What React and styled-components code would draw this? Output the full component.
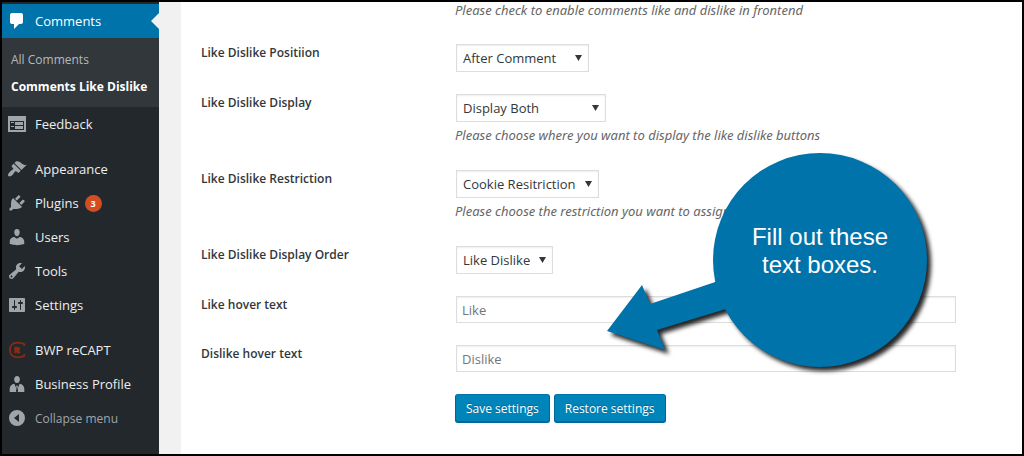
import React from 'react';
import styled, { createGlobalStyle } from 'styled-components';

const GlobalStyle = createGlobalStyle`
    * {
        box-sizing: border-box;
    }

    body {
        margin: 0;
        background: #fff;
        color: #444;
        font-family: 'Open Sans', 'Noto Sans', sans-serif;
        font-size: 13px;
    }
`;

const Frame = styled.div`
    position: relative;
    display: flex;
    min-height: 100vh;
    border: 2px solid #000;
    background: #f1f1f1;
    overflow: hidden;
`;

const Sidebar = styled.nav`
    flex: 0 0 157px;
    padding-top: 2px;
    background: #23282d;
`;

const MenuGroup = styled.ul`
    list-style: none;
    margin: 0 0 11px;
    padding: 0;
`;

const MenuLink = styled.a`
    position: relative;
    display: flex;
    align-items: center;
    gap: 8px;
    height: 34px;
    padding-left: 5px;
    color: ${props => props.$current ? '#fff' : '#eee'};
    background: ${props => props.$current ? '#0073aa' : 'transparent'};
    text-decoration: none;
    white-space: nowrap;
`;

const CurrentArrow = styled.span`
    position: absolute;
    right: 0;
    top: 9px;
    border: 8px solid transparent;
    border-left: 0;
    border-right-color: #f1f1f1;
`;

const MenuIcon = styled.svg`
    flex: none;
    width: 20px;
    height: 20px;
    fill: ${props => props.$color || '#a0a5aa'};
`;

const SubMenu = styled.ul`
    list-style: none;
    margin: 0;
    padding: 8px 0 7px;
    background: #32373c;
`;

const SubLink = styled.a`
    display: block;
    padding-left: 9px;
    line-height: 27px;
    font-size: 12px;
    font-weight: ${props => props.$current ? 700 : 400};
    color: ${props => props.$current ? '#fff' : '#b4b9be'};
    text-decoration: none;
    white-space: nowrap;
`;

const Badge = styled.span`
    margin-left: -2px;
    width: 17px;
    border-radius: 9px;
    background: #d54e21;
    color: #fff;
    font-size: 9px;
    font-weight: 700;
    line-height: 17px;
    text-align: center;
`;

const CollapseButton = styled.button`
    display: flex;
    align-items: center;
    gap: 8px;
    width: 100%;
    height: 34px;
    padding: 0 0 0 5px;
    border: 0;
    background: none;
    color: #a0a5aa;
    font: inherit;
    font-size: 12px;
`;

const Panel = styled.main`
    flex: 1;
    margin-left: 22px;
    padding: 0 66px 24px 20px;
    background: #fff;
`;

const Field = styled.div`
    display: grid;
    grid-template-columns: 254px 1fr;
    margin-bottom: 22px;
`;

const Label = styled.label`
    line-height: 17px;
    font-weight: 600;
    font-size: 12px;
    color: #32373c;
`;

const Control = styled.div`
    grid-column: 2;
    padding-left: 1px;
`;

const Description = styled.p`
    margin: ${props => props.$first ? '0 0 4px -1px' : '5px 0 5px -1px'};
    font-family: 'Noto Sans', 'Open Sans', sans-serif;
    font-style: italic;
    line-height: 16px;
    color: #666;
    white-space: nowrap;
`;

const SelectBox = styled.div`
    display: grid;
    align-items: center;
    width: ${props => props.$width};

    > * {
        grid-area: 1 / 1;
    }

    > svg {
        justify-self: end;
        margin-right: 7px;
        pointer-events: none;
    }
`;

const Select = styled.select`
    appearance: none;
    width: 100%;
    height: 28px;
    padding: 0 6px;
    border: 1px solid #ddd;
    border-radius: 0;
    background: #fff;
    box-shadow: inset 0 1px 2px rgba(0, 0, 0, 0.07);
    color: #32373c;
    font: inherit;
    font-size: 13px;
`;

const TextInput = styled.input`
    display: block;
    width: 100%;
    height: 27px;
    padding: 0 5px;
    border: 1px solid #ddd;
    background: #fff;
    box-shadow: inset 0 1px 2px rgba(0, 0, 0, 0.07);
    color: #32373c;
    font: inherit;
    font-size: 13px;

    &::placeholder {
        color: #757575;
    }
`;

const Actions = styled.div`
    display: flex;
    gap: 4px;
    margin-left: 254px;
`;

const Button = styled.button`
    height: 29px;
    padding: 0 10px;
    border: 1px solid #006799;
    border-top-color: #0073aa;
    border-radius: 3px;
    background: #0085ba;
    box-shadow: inset 0 -1px 0 #006799;
    color: #fff;
    font: inherit;
    font-size: 12px;
    text-shadow: 0 -1px 1px #006799;
    white-space: nowrap;
`;

const Callout = styled.aside`
    position: absolute;
    top: 150px;
    right: 89px;
    width: 330px;
    height: 222px;
    color: #fff;

    > svg {
        display: block;
        overflow: visible;
        filter: drop-shadow(4px 4px 2px rgba(0, 0, 0, 0.85));
    }
`;

const CalloutText = styled.p`
    position: absolute;
    top: 71px;
    right: 6px;
    width: 214px;
    margin: 0;
    font-family: 'Liberation Sans', Arial, sans-serif;
    font-size: 24px;
    line-height: 28px;
    text-align: center;
`;

const icons = {
    comments: <path d="M5 2h9c1.1 0 2 .9 2 2v7c0 1.1-.9 2-2 2h-2l-5 5v-5H5c-1.1 0-2-.9-2-2V4c0-1.1.9-2 2-2z" />,
    feedback: <path fillRule="evenodd" d="M1 2h18v16H1zM3 7v9h14V7zM4 8v1h3V8H4zm4 0v3h8V8H8zm-4 4v1h3v-1H4zm4 0v3h8v-3H8z" />,
    appearance: <path d="M14.48 11.06L7.41 3.99l1.5-1.5c.5-.56 2.3-.47 3.51.32 1.21.8 1.43 1.28 2.91 2.1 1.18.64 2.45 1.26 4.45.85zm-.71.71L6.7 4.7 4.93 6.47c-.39.39-.39 1.02 0 1.41l1.06 1.06c.39.39.39 1.03 0 1.42-.6.6-1.43 1.11-2.21 1.69-.35.26-.7.53-1.01.84C1.43 14.23.4 16.08 1.4 17.07c.99 1 2.84-.03 4.18-1.36.31-.31.58-.66.85-1.02.57-.78 1.08-1.61 1.69-2.21.39-.39 1.02-.39 1.41 0l1.06 1.06c.39.39 1.02.39 1.41 0z" />,
    plugins: <path d="M13.11 4.36L9.87 7.6 8 5.73l3.24-3.24c.35-.34 1.05-.2 1.56.32.52.51.66 1.21.31 1.55zm-8 1.77l.91-1.12 9.01 9.01-1.19.84c-.71.71-2.63 1.16-3.82 1.16H6.14L4.9 17.26c-.59.59-1.54.59-2.12 0-.59-.58-.59-1.53 0-2.12l1.24-1.24v-3.88c0-1.13.4-3.19 1.09-3.89zm7.26 3.97l3.24-3.24c.34-.35 1.04-.21 1.55.31.52.51.66 1.21.31 1.55l-3.24 3.25z" />,
    users: <path d="M10 9.25c-2.27 0-2.73-3.44-2.73-3.44C7 4.02 7.82 2 9.97 2c2.16 0 2.98 2.02 2.71 3.81 0 0-.41 3.44-2.68 3.44zm0 2.57L12.72 10c2.39 0 4.52 2.33 4.52 4.53v2.49s-3.65 1.13-7.24 1.13c-3.65 0-7.24-1.13-7.24-1.13v-2.49c0-2.25 1.94-4.48 4.47-4.48z" />,
    tools: <path d="M16.68 9.77c-1.34 1.34-3.3 1.67-4.95.99l-5.41 6.52c-.99.99-2.59.99-3.58 0s-.99-2.59 0-3.57l6.52-5.42c-.68-1.65-.35-3.61.99-4.95 1.28-1.28 3.12-1.62 4.72-1.06l-2.89 2.89 2.82 2.82 2.86-2.87c.53 1.58.18 3.39-1.08 4.65zM3.81 16.21c.4.39 1.04.39 1.43 0 .4-.4.4-1.04 0-1.43-.39-.4-1.03-.4-1.43 0-.39.39-.39 1.03 0 1.43z" />,
    settings: <path d="M18 16V4c0-.55-.45-1-1-1H3c-.55 0-1 .45-1 1v12c0 .55.45 1 1 1h14c.55 0 1-.45 1-1zM8 11h1c.55 0 1 .45 1 1s-.45 1-1 1H8v1.5c0 .28-.22.5-.5.5s-.5-.22-.5-.5V13H6c-.55 0-1-.45-1-1s.45-1 1-1h1V5.5c0-.28.22-.5.5-.5s.5.22.5.5V11zm5-2h-1c-.55 0-1-.45-1-1s.45-1 1-1h1V5.5c0-.28.22-.5.5-.5s.5.22.5.5V7h1c.55 0 1 .45 1 1s-.45 1-1 1h-1v5.5c0 .28-.22.5-.5.5s-.5-.22-.5-.5V9z" />,
    captcha: (
        <g fill="none" stroke="#8c2b14">
            <path strokeWidth="1.8" d="M17.3 6V4.2C15.500 2.900 13 2.700 10.500 2.700 5.500 2.700 2.900 6 2.900 10s2.600 7.300 7.600 7.300c2.500 0 5-.2 6.800-1.500V14" />
            <path strokeWidth="2.4" d="M8.500 13.200V8h2.200c1.700 0 1.700 2.600 0 2.600H9m1.500 0l1.800 2.600" />
        </g>
    ),
    business: (
        <g>
            <path d="M10 9c-2.100 0-2.800-2-2.800-3.600C7.200 3.300 8.300 2 10 2s2.800 1.300 2.800 3.400C12.800 7 12.100 9 10 9z" />
            <path d="M7.300 9.800L9 13.500l.5-2h1l.5 2 1.700-3.700c2.700.4 4.600 2.300 4.600 5V18h-6.600l.3-1-.7-4h-.6L9 17l.3 1H2.700v-3.200c0-2.700 1.900-4.600 4.600-5z" />
        </g>
    ),
    collapse: <path fillRule="evenodd" d="M10 2a8 8 0 1 0 0 16 8 8 0 0 0 0-16zm2 4v8l-5-4z" />,
};

const Icon = ({ name, color }) => (
    <MenuIcon viewBox="0 0 20 20" $color={color} aria-hidden="true">{icons[name]}</MenuIcon>
);

const MenuItem = ({ icon, label, count }) => (
    <li>
        <MenuLink href="#">
            <Icon name={icon} />
            {label}
            {count && <Badge>{count}</Badge>}
        </MenuLink>
    </li>
);

const SelectField = ({ id, label, value, width, description }) => (
    <Field>
        <Label htmlFor={id}>{label}</Label>
        <Control>
            <SelectBox $width={width}>
                <Select id={id}>
                    <option>{value}</option>
                </Select>
                <svg width="7" height="6" viewBox="0 0 7 6" fill="#32373c"><path d="M0 0h7L3.500 6z" /></svg>
            </SelectBox>
            {description && <Description>{description}</Description>}
        </Control>
    </Field>
);

const TextField = ({ id, label, placeholder }) => (
    <Field>
        <Label htmlFor={id}>{label}</Label>
        <Control>
            <TextInput id={id} type="text" placeholder={placeholder} />
        </Control>
    </Field>
);

class App extends React.Component {
    render(){
        return (
            <Frame>
                <GlobalStyle />
                <Sidebar>
                    <MenuGroup>
                        <li>
                            <MenuLink href="#" $current>
                                <Icon name="comments" color="#fff" />
                                Comments
                                <CurrentArrow />
                            </MenuLink>
                            <SubMenu>
                                <li><SubLink href="#">All Comments</SubLink></li>
                                <li><SubLink href="#" $current>Comments Like Dislike</SubLink></li>
                            </SubMenu>
                        </li>
                        <MenuItem icon="feedback" label="Feedback" />
                    </MenuGroup>
                    <MenuGroup>
                        <MenuItem icon="appearance" label="Appearance" />
                        <MenuItem icon="plugins" label="Plugins" count="3" />
                        <MenuItem icon="users" label="Users" />
                        <MenuItem icon="tools" label="Tools" />
                        <MenuItem icon="settings" label="Settings" />
                    </MenuGroup>
                    <MenuGroup>
                        <MenuItem icon="captcha" label="BWP reCAPT" />
                        <MenuItem icon="business" label="Business Profile" />
                        <li>
                            <CollapseButton type="button">
                                <Icon name="collapse" />
                                Collapse menu
                            </CollapseButton>
                        </li>
                    </MenuGroup>
                </Sidebar>
                <Panel>
                    <Field>
                        <Control>
                            <Description $first>Please check to enable comments like and dislike in frontend</Description>
                        </Control>
                    </Field>
                    <SelectField id="position" label="Like Dislike Positiion" value="After Comment" width="133px" />
                    <SelectField
                        id="display"
                        label="Like Dislike Display"
                        value="Display Both"
                        width="150px"
                        description="Please choose where you want to display the like dislike buttons"
                    />
                    <SelectField
                        id="restriction"
                        label="Like Dislike Restriction"
                        value="Cookie Resitriction"
                        width="143px"
                        description="Please choose the restriction you want to assign"
                    />
                    <SelectField id="order" label="Like Dislike Display Order" value="Like Dislike" width="97px" />
                    <TextField id="like" label="Like hover text" placeholder="Like" />
                    <TextField id="dislike" label="Dislike hover text" placeholder="Dislike" />
                    <Actions>
                        <Button type="submit">Save settings</Button>
                        <Button type="button">Restore settings</Button>
                    </Actions>
                </Panel>
                <Callout>
                    <svg width="330" height="222" viewBox="0 0 330 222" fill="#0073aa">
                        <circle cx="217" cy="108" r="107" />
                        <path d="M4 179L39 133l8 19 80-27 12 27-85 26 8 20z" />
                    </svg>
                    <CalloutText>Fill out these<br />text boxes.</CalloutText>
                </Callout>
            </Frame>
        );
    }
}

export default App;
